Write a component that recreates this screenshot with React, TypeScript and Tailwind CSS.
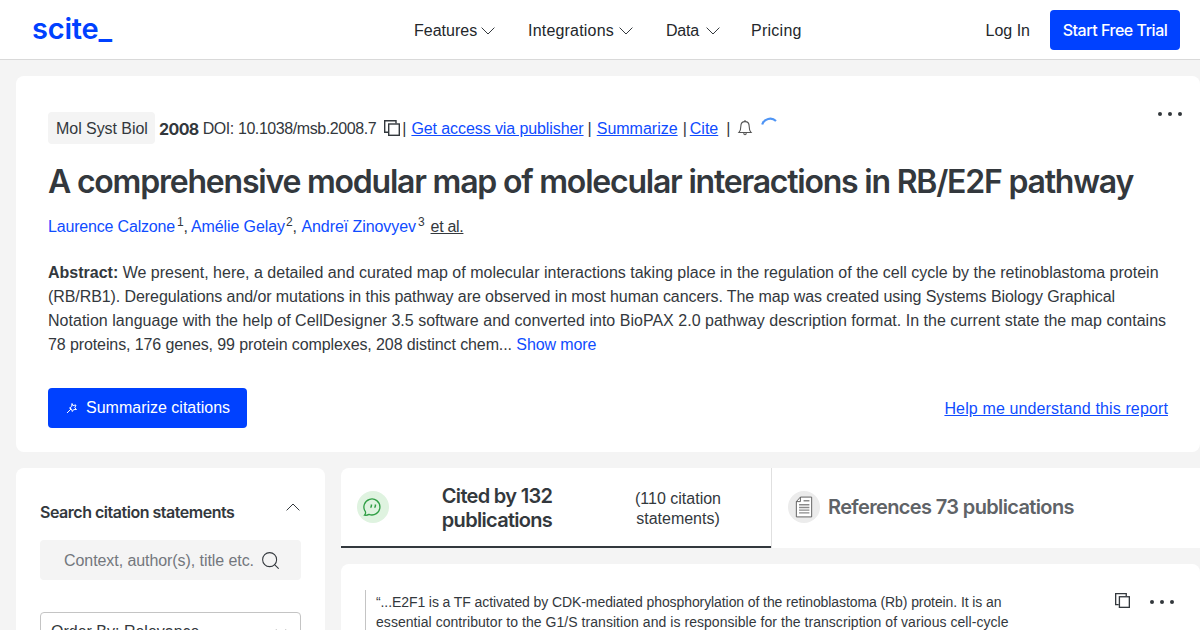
import React from "react";
import { ChevronDown, Search } from "lucide-react";

const font = "font-['Liberation_Sans',sans-serif]";

function CopyIcon({ className }: { className?: string }) {
  return (
    <svg viewBox="0 0 16 16" className={className} fill="none" stroke="#33383d" strokeWidth="1.4">
      <path d="M4 12.3H.7V.7H12V3.6" />
      <rect x="4.7" y="4" width="10.6" height="11.3" fill="white" />
    </svg>
  );
}

function Chevron({ up = false, className }: { up?: boolean; className?: string }) {
  return (
    <svg viewBox="0 0 14 8" className={`w-[14px] h-2 ${className ?? ""}`} fill="none" stroke="#33383d" strokeWidth="1">
      <path d={up ? "M.6 7.4 7 1l6.4 6.4" : "M.6.6 7 7 13.4.6"} />
    </svg>
  );
}

function Dots({ className }: { className?: string }) {
  return (
    <div className={`flex gap-[6px] ${className ?? ""}`}>
      <span className="w-1 h-1 rounded-full bg-[#33383d]" />
      <span className="w-1 h-1 rounded-full bg-[#33383d]" />
      <span className="w-1 h-1 rounded-full bg-[#33383d]" />
    </div>
  );
}

const A = ({ children, className }: { children: React.ReactNode; className?: string }) => (
  <a className={`text-[#0f4cff] underline ${className ?? ""}`}>{children}</a>
);

export default function App() {
  return (
    <div className={`${font} h-[630px] w-[1200px] overflow-hidden bg-[#f4f4f4] text-[#33383d]`}>
      <header className="h-[60px] bg-white border-b border-[#d9d9d9] flex items-center pl-8 pr-5">
        <div className="w-[382px] text-[#0041ff] text-[29px] font-['Inter'] font-semibold tracking-[-0.2px] leading-none pb-[2px]">scite_</div>
        <nav className="flex items-center text-base text-[#23272b] pt-[2px]">
          <span className="w-[62px]">Features</span>
          <Chevron className="ml-[5px]" />
          <span className="ml-[33px] tracking-[0.2px]">Integrations</span>
          <Chevron className="ml-[5px]" />
          <span className="ml-[33px] tracking-[-0.2px]">Data</span>
          <Chevron className="ml-[7px]" />
          <span className="ml-[31px] tracking-[0.25px]">Pricing</span>
        </nav>
        <div className="ml-auto flex items-center gap-5 text-base">
          <span className="text-[#23272b] pt-[2px]">Log In</span>
          <button className="h-10 w-[130px] rounded bg-[#0041ff] text-white font-['Inter'] font-medium text-base tracking-[-0.47px]">Start Free Trial</button>
        </div>
      </header>

      <main className="pl-4 pt-4">
        <section className="relative h-[376px] bg-white rounded-lg pl-8 pr-8 pt-9">
          <Dots className="absolute right-[18px] top-[36px]" />
          <div className="flex items-center h-8 text-base whitespace-nowrap">
            <span className="h-8 w-[107px] pl-2 flex items-center rounded bg-[#f4f4f4] mr-1 pt-[1px] tracking-[-0.05px]">Mol Syst Biol</span>
            <b className="font-['Inter'] font-bold tracking-[-0.6px] pt-[1px]">2008</b>
            <span className="ml-1 tracking-[-0.42px] pt-[1px]">DOI: 10.1038/msb.2008.7</span>
            <CopyIcon className="w-4 h-4 ml-2" />
            <span className="ml-[2px] mr-[5px] pt-[1px]">|</span>
            <A className="tracking-[-0.09px] pt-[1px]">Get access via publisher</A>
            <span className="ml-[4px] mr-[5px] pt-[1px]">|</span>
            <A className="pt-[1px]">Summarize</A>
            <span className="ml-[5px] mr-[3px] pt-[1px]">|</span>
            <A className="pt-[1px]">Cite</A>
            <span className="ml-[8px] pt-[1px]">|</span>
            <svg viewBox="0 0 16 18" className="w-[16px] h-[18px] ml-[7px]" fill="none" stroke="#555" strokeWidth="1.1">
              <path d="M2 13.5C3.5 12 3.8 11 3.8 7.5 3.8 4.5 5.5 2.6 8 2.6S12.2 4.5 12.2 7.5C12.2 11 12.5 12 14 13.5Z" />
              <path d="M8 1V2.6M6.8 14C6.8 15 7.3 15.8 8 15.8S9.2 15 9.2 14" />
            </svg>
            <svg viewBox="0 0 16 16" className="w-4 h-4 ml-[8px] -mt-2" fill="none" stroke="#4f95f5" strokeWidth="2.2">
              <path d="M1.2 8.5A8.5 8.5 0 0 1 15 5" />
            </svg>
          </div>
          <h1 className="mt-[18px] text-[32px] leading-[40px] font-['Inter'] font-semibold tracking-[-0.038em] whitespace-nowrap">
            A comprehensive modular map of molecular interactions in RB/E2F pathway
          </h1>
          <div className="mt-[13px] h-6 flex items-center text-base whitespace-nowrap">
            <span className="text-[#0f4cff] tracking-[-0.18px]">Laurence Calzone<sup className="text-xs text-[#33383d] ml-[2px]">1</sup></span>
            <span className="mr-[2px]">,</span>
            <span className="text-[#0f4cff] ml-[1px] tracking-[-0.1px]">Amélie Gelay<sup className="text-xs text-[#33383d] ml-[1px]">2</sup></span>
            <span>,&nbsp;</span>
            <span className="text-[#0f4cff] tracking-[-0.07px]">Andreï Zinovyev<sup className="text-xs text-[#33383d] ml-[2px]">3</sup></span>
            <span className="ml-[6px] underline tracking-[-0.3px]">et al.</span>
          </div>
          <p className="mt-[22px] text-base leading-6 w-[1124px]">
            <b className="font-bold">Abstract:</b> We present, here, a detailed and curated map of molecular interactions taking place in the regulation of the cell cycle by the retinoblastoma protein <span className="tracking-[-0.08px]">(RB/RB1). Deregulations and/or mutations in this pathway are observed in most human cancers. The map was created using Systems Biology Graphical</span> <span className="tracking-[0.02px]">Notation language with the help of CellDesigner 3.5 software and converted into BioPAX 2.0 pathway description format. In the current state the map contains</span> <span className="tracking-[-0.1px]">78 proteins, 176 genes, 99 protein complexes, 208 distinct chem...</span> <span className="text-[#0f4cff] tracking-[-0.1px]">Show more</span>
          </p>
          <div className="mt-[31px] flex items-center justify-between">
            <button className="h-10 w-[199px] rounded bg-[#0041ff] text-white text-base flex items-center pl-[18px] gap-2">
              <svg viewBox="0 0 12 12" className="w-3 h-3" fill="none" stroke="white" strokeWidth="1">
                <path d="M1 11 5 7M6 1.5 6.8 3.5 10 3 8.8 5.8 10.5 7.5 7.6 7.6 6.3 9.5 5.5 7 3.5 6 5.7 4.6Z" />
              </svg>
              Summarize citations
            </button>
            <A className="tracking-[0.13px] pt-[1px]">Help me understand this report</A>
          </div>
        </section>

        <div className="mt-4 flex gap-4">
          <aside className="w-[309px] h-[400px] shrink-0 bg-white rounded-lg px-6 pt-8">
            <div className="flex items-center justify-between h-6 pr-[1px]">
              <span className="font-['Inter'] font-semibold text-base tracking-[-0.48px]">Search citation statements</span>
              <Chevron up className="-mt-[10px]" />
            </div>
            <div className="mt-4 h-10 rounded bg-[#f4f4f4] flex items-center pl-6 pr-2 text-base text-[#73777d] tracking-[-0.07px] whitespace-nowrap">
              <span className="pt-[1px]">Context, author(s), title etc.</span>
              <Search size={21} strokeWidth={1.2} className="ml-[6px] text-[#33383d] shrink-0" />
            </div>
            <div className="mt-8 h-10 rounded border border-[#c4c4c4] flex items-center justify-between px-[10px] text-base">
              <span>Order By: Relevance</span>
              <ChevronDown size={18} strokeWidth={1.2} className="text-[#888]" />
            </div>
          </aside>
          <div className="flex-1 min-w-0">
            <div className="flex h-20">
              <div className="w-[430px] shrink-0 bg-white rounded-tl-lg border-b-2 border-[#33383d] flex items-center pl-4">
                <div className="w-8 h-8 rounded-full bg-[#dff3e0] flex items-center justify-center shrink-0">
                  <svg viewBox="0 0 20 20" className="w-5 h-5" fill="none" stroke="#2f9e44" strokeWidth="1.3">
                    <path d="M1.5 18.2C2.6 17 2.8 15.8 2.4 14.6A8 8 0 1 1 6 17.4C4.6 18.3 3 18.5 1.5 18.2Z" />
                    <path d="M8.4 7.6V8.8C8.4 9.6 8.1 10.1 7.5 10.6M12.4 7.6V8.8C12.4 9.6 12.1 10.1 11.5 10.6" strokeWidth="1.5" />
                  </svg>
                </div>
                <div className="w-[160px] ml-[28px] pt-[2px] text-[20px] leading-6 font-['Inter'] font-semibold tracking-[-0.035em] text-center">Cited by 132 publications</div>
                <div className="w-[120px] ml-[41px] pt-[4px] text-base leading-5 text-center">(110 citation statements)</div>
              </div>
              <div className="flex-1 bg-white border-l border-[#e0e0e0] flex items-center pl-4 pb-[2px]">
                <div className="w-8 h-8 rounded-full bg-[#ececec] flex items-center justify-center shrink-0">
                  <svg viewBox="0 0 20 24" className="w-[18px] h-[22px]" fill="#fff" stroke="#555" strokeWidth="1">
                    <path d="M6 1H18.5V23H1.5V6Z" />
                    <path d="M6 1V6H1.5" fill="none" />
                    <path d="M9.5 5H16M4.5 9.5H16M4.5 12.5H16M4.5 15.5H16M4.5 18.5H16" stroke="#8a8a8a" strokeWidth="1.6" fill="none" />
                  </svg>
                </div>
                <span className="ml-2 text-[20px] font-['Inter'] font-semibold tracking-[-0.032em] text-[#5f6367]">References 73 publications</span>
              </div>
            </div>
            <div className="relative mt-4 bg-white rounded-lg h-[200px] pl-6 pr-[190px] pt-[26px]">
              <CopyIcon className="absolute right-[70px] top-[29px] w-[15px] h-[15px]" />
              <Dots className="absolute right-[26px] top-[36px]" />
              <p className="border-l border-[#c4c4c4] pl-[10px] pt-[2px] text-sm leading-[20px] w-[656px]">
                <span className="tracking-[-0.09px]">“...E2F1 is a TF activated by CDK-mediated phosphorylation of the retinoblastoma (Rb) protein. It is an</span> <span className="tracking-[0.05px]">essential contributor to the G1/S transition and is responsible for the transcription of various cell-cycle</span>
              </p>
            </div>
          </div>
        </div>
      </main>
    </div>
  );
}
